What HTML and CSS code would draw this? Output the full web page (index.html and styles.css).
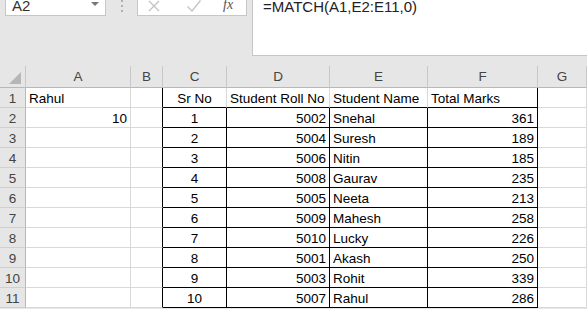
FILE: index.html
```html
<!DOCTYPE html>
<html lang="en">
<head>
    <meta charset="UTF-8">
    <title>MATCH - Excel</title>
    <link rel="stylesheet" href="styles.css">
</head>
<body>
    <div class="toolbar">
        <div class="name-box">
            <span>A2</span>
            <span class="arrow"></span>
        </div>
        <div class="grip"><i></i><i></i><i></i></div>
        <div class="buttons">
            <svg class="icon" width="14" height="14" viewBox="0 0 14 14"><path d="M2 2 L12 12 M12 2 L2 12" stroke="#c4c4c4" stroke-width="1.4" fill="none"/></svg>
            <svg class="icon" width="16" height="14" viewBox="0 0 16 14"><path d="M1.5 7.5 L6 12 L14.5 1.5" stroke="#c4c4c4" stroke-width="1.4" fill="none"/></svg>
            <span class="fx">fx</span>
        </div>
        <div class="formula">=MATCH(A1,E2:E11,0)</div>
    </div>

    <div class="sheet">
        <div class="row head">
            <div class="corner"><span class="tri"></span></div>
            <div class="ch">A</div>
            <div class="ch">B</div>
            <div class="ch">C</div>
            <div class="ch">D</div>
            <div class="ch">E</div>
            <div class="ch">F</div>
            <div class="ch">G</div>
        </div>
        <div class="row">
            <div class="rh">1</div>
            <div class="c">Rahul</div>
            <div class="c bx"></div>
            <div class="c ctr bb">Sr No</div>
            <div class="c bb">Student Roll No</div>
            <div class="c bb">Student Name</div>
            <div class="c bb bx">Total Marks</div>
            <div class="c"></div>
        </div>
        <div class="row">
            <div class="rh">2</div>
            <div class="c r">10</div>
            <div class="c bx"></div>
            <div class="c ctr bb bx">1</div>
            <div class="c r bb bx">5002</div>
            <div class="c bb bx">Snehal</div>
            <div class="c r bb bx">361</div>
            <div class="c"></div>
        </div>
        <div class="row">
            <div class="rh">3</div>
            <div class="c"></div>
            <div class="c bx"></div>
            <div class="c ctr bb bx">2</div>
            <div class="c r bb bx">5004</div>
            <div class="c bb bx">Suresh</div>
            <div class="c r bb bx">189</div>
            <div class="c"></div>
        </div>
        <div class="row">
            <div class="rh">4</div>
            <div class="c"></div>
            <div class="c bx"></div>
            <div class="c ctr bb bx">3</div>
            <div class="c r bb bx">5006</div>
            <div class="c bb bx">Nitin</div>
            <div class="c r bb bx">185</div>
            <div class="c"></div>
        </div>
        <div class="row">
            <div class="rh">5</div>
            <div class="c"></div>
            <div class="c bx"></div>
            <div class="c ctr bb bx">4</div>
            <div class="c r bb bx">5008</div>
            <div class="c bb bx">Gaurav</div>
            <div class="c r bb bx">235</div>
            <div class="c"></div>
        </div>
        <div class="row">
            <div class="rh">6</div>
            <div class="c"></div>
            <div class="c bx"></div>
            <div class="c ctr bb bx">5</div>
            <div class="c r bb bx">5005</div>
            <div class="c bb bx">Neeta</div>
            <div class="c r bb bx">213</div>
            <div class="c"></div>
        </div>
        <div class="row">
            <div class="rh">7</div>
            <div class="c"></div>
            <div class="c bx"></div>
            <div class="c ctr bb bx">6</div>
            <div class="c r bb bx">5009</div>
            <div class="c bb bx">Mahesh</div>
            <div class="c r bb bx">258</div>
            <div class="c"></div>
        </div>
        <div class="row">
            <div class="rh">8</div>
            <div class="c"></div>
            <div class="c bx"></div>
            <div class="c ctr bb bx">7</div>
            <div class="c r bb bx">5010</div>
            <div class="c bb bx">Lucky</div>
            <div class="c r bb bx">226</div>
            <div class="c"></div>
        </div>
        <div class="row">
            <div class="rh">9</div>
            <div class="c"></div>
            <div class="c bx"></div>
            <div class="c ctr bb bx">8</div>
            <div class="c r bb bx">5001</div>
            <div class="c bb bx">Akash</div>
            <div class="c r bb bx">250</div>
            <div class="c"></div>
        </div>
        <div class="row">
            <div class="rh">10</div>
            <div class="c"></div>
            <div class="c bx"></div>
            <div class="c ctr bb bx">9</div>
            <div class="c r bb bx">5003</div>
            <div class="c bb bx">Rohit</div>
            <div class="c r bb bx">339</div>
            <div class="c"></div>
        </div>
        <div class="row">
            <div class="rh">11</div>
            <div class="c"></div>
            <div class="c bx"></div>
            <div class="c ctr bb bx">10</div>
            <div class="c r bb bx">5007</div>
            <div class="c bb bx">Rahul</div>
            <div class="c r bb bx">286</div>
            <div class="c"></div>
        </div>
    </div>
</body>
</html>
```

FILE: styles.css
```css
body {
    margin: 0;
    background-color: #e6e6e6;
    font-family: "Liberation Sans", Arial, sans-serif;
    overflow: hidden;
}

/* formula bar */
.toolbar {
    display: flex;
    align-items: flex-start;
    height: 72px;
    margin-top: -6px;
}
.name-box {
    box-sizing: border-box;
    width: 101px;
    height: 22px;
    margin-left: 5px;
    background-color: white;
    border: 1px solid #c6c6c6;
    display: flex;
    align-items: center;
    justify-content: space-between;
    padding: 0 6px 0 6px;
    font-size: 15px;
    color: #333;
}
.name-box .arrow {
    width: 0;
    height: 0;
    border-left: 4px solid transparent;
    border-right: 4px solid transparent;
    border-top: 4px solid #777;
    margin-top: -3px;
}
.grip {
    width: 31px;
    display: flex;
    flex-direction: column;
    align-items: center;
    gap: 3px;
    padding-top: 6px;
}
.grip i {
    width: 2px;
    height: 2px;
    background-color: #b0b0b0;
}
.buttons {
    box-sizing: border-box;
    width: 110px;
    height: 22px;
    background-color: white;
    border: 1px solid #c6c6c6;
    display: flex;
    align-items: center;
    padding: 0 0 0 9px;
    gap: 25px;
}
.buttons .icon {
    margin-top: 1px;
}
.fx {
    font-family: "Liberation Serif", serif;
    font-style: italic;
    font-size: 14px;
    color: #555;
    margin-left: -4px;
}
.formula {
    flex: 1;
    margin-left: 5px;
    height: 62px;
    box-sizing: border-box;
    background-color: white;
    border-left: 1px solid #c6c6c6;
    border-bottom: 1px solid #c6c6c6;
    padding: 5px 0 0 10px;
    font-size: 15px;
    line-height: 16px;
    color: #222;
}

/* grid */
.row {
    display: grid;
    grid-template-columns: 26px 105px 32px 64px 103px 98px 110px 1fr;
    height: 20px;
}
.row > div {
    box-sizing: border-box;
    border-right: 1px solid #d9d9d9;
    border-bottom: 1px solid #d9d9d9;
    font-size: 13.5px;
    line-height: 22px;
    white-space: nowrap;
    overflow: hidden;
}
.row.head {
    height: 22px;
}
.row.head > div {
    border-bottom-color: #b8b8b8;
    border-right-color: #c8c8c8;
    text-align: center;
    color: #444;
    line-height: 21px;
}
.corner {
    position: relative;
}
.corner .tri {
    position: absolute;
    right: 4px;
    bottom: 3px;
    width: 0;
    height: 0;
    border-left: 12px solid transparent;
    border-bottom: 12px solid #b6b6b6;
}
.row > .rh {
    text-align: center;
    color: #444;
    background-color: #e6e6e6;
    border-right-color: #b8b8b8;
    border-bottom-color: #cfcfcf;
}
.row > .c {
    background-color: white;
    color: black;
    padding: 0 3px;
}
.c.r {
    text-align: right;
}
.c.ctr {
    text-align: center;
}
.row > .c.bx {
    border-right-color: black;
}
.row > .c.bb {
    border-bottom-color: black;
}
```
